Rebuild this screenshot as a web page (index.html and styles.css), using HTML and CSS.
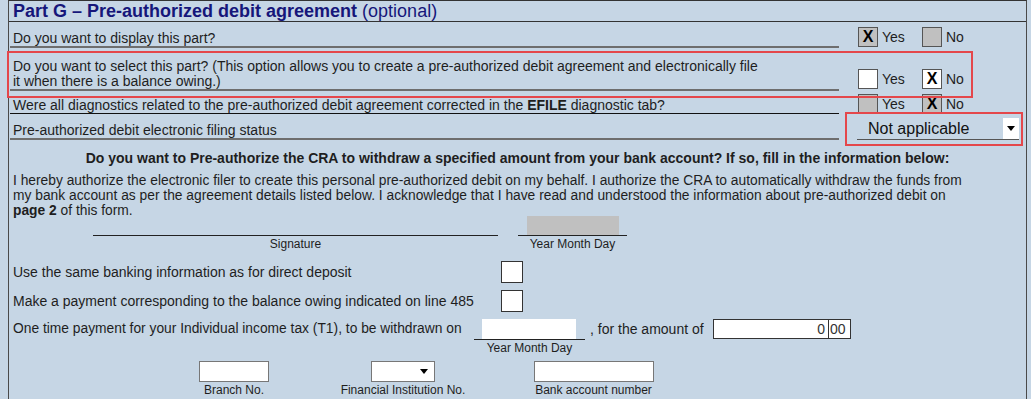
FILE: index.html
```html
<!DOCTYPE html>
<html>
<head>
<meta charset="utf-8">
<link rel="stylesheet" href="styles.css">
</head>
<body>
<div class="form">
  <div class="head"><b>Part G – Pre-authorized debit agreement</b> (optional)</div>

  <div class="q q1">
    <div class="qlabel">Do you want to display this part?</div>
    <div class="opts">
      <span class="opt"><span class="cb gray">X</span>Yes</span>
      <span class="opt"><span class="cb gray"></span>No</span>
    </div>
  </div>

  <div class="q q2 hl">
    <div class="qlabel">Do you want to select this part? (This option allows you to create a pre-authorized debit agreement and electronically file<br>it when there is a balance owing.)</div>
    <div class="opts">
      <span class="opt"><span class="cb"></span>Yes</span>
      <span class="opt"><span class="cb">X</span>No</span>
    </div>
  </div>

  <div class="q q3">
    <div class="qlabel thin">Were all diagnostics related to the pre-authorized debit agreement corrected in the <b>EFILE</b> diagnostic tab?</div>
    <div class="opts">
      <span class="opt"><span class="cb gray"></span>Yes</span>
      <span class="opt"><span class="cb gray">X</span>No</span>
    </div>
  </div>

  <div class="q q4">
    <div class="qlabel">Pre-authorized debit electronic filing status</div>
    <div class="select hl">
      <div class="selfield"><span class="seltext">Not applicable</span><span class="arrow"><span class="tri"></span></span></div>
    </div>
  </div>

  <p class="ask">Do you want to Pre-authorize the CRA to withdraw a specified amount from your bank account? If so, fill in the information below:</p>

  <p class="para">I hereby authorize the electronic filer to create this personal pre-authorized debit on my behalf. I authorize the CRA to automatically withdraw the funds from<br>my bank account as per the agreement details listed below. I acknowledge that I have read and understood the information about pre-authorized debit on<br><b>page 2</b> of this form.</p>

  <div class="sig">
    <div class="sigcol">
      <div class="sigspace"></div>
      <div class="cap">Signature</div>
    </div>
    <div class="datecol">
      <div class="dateline"><div class="datebox"></div></div>
      <div class="cap">Year Month Day</div>
    </div>
  </div>

  <div class="crow first">
    <div class="clabel">Use the same banking information as for direct deposit</div>
    <span class="wbox"></span>
  </div>
  <div class="crow">
    <div class="clabel">Make a payment corresponding to the balance owing indicated on line 485</div>
    <span class="wbox"></span>
  </div>

  <div class="onetime">
    <div class="olabel">One time payment for your Individual income tax (T1), to be withdrawn on</div>
    <div class="odate">
      <div class="dateline"><div class="wfield"></div></div>
      <div class="cap">Year Month Day</div>
    </div>
    <div class="amtlabel">, for the amount of</div>
    <div class="amount"><span class="dollars">0</span><span class="cents">00</span></div>
  </div>

  <div class="bank">
    <div class="bgroup g1">
      <div class="bbox branch"></div>
      <div class="cap">Branch No.</div>
    </div>
    <div class="bgroup g2">
      <div class="bbox fi"><span class="tri"></span></div>
      <div class="cap">Financial Institution No.</div>
    </div>
    <div class="bgroup g3">
      <div class="bbox acct"></div>
      <div class="cap">Bank account number</div>
    </div>
  </div>
</div>
</body>
</html>
```

FILE: styles.css
```css
html, body {
  margin: 0;
  padding: 0;
  background: #c6d6e5;
}
body {
  font-family: "Liberation Sans", Arial, sans-serif;
  font-size: 14px;
  color: #1e1e1e;
}
.form {
  margin-left: 8px;
  width: 1019px;
  box-sizing: border-box;
  min-height: 430px;
  border-left: 1px solid #4a4a4a;
  border-right: 1px solid #4a4a4a;
  border-top: 1px solid #333;
}
.head {
  height: 20px;
  border-bottom: 1px solid #333;
  padding-left: 4px;
  font-size: 18px;
  line-height: 21px;
  color: #16167a;
}
.head b { font-weight: bold; }

.q {
  display: flex;
  align-items: flex-start;
}
.qlabel {
  box-sizing: border-box;
  flex-shrink: 0;
  margin-left: 1px;
  width: 829px;
  padding-left: 3px;
  border-bottom: 2px solid #6e6e6e;
  line-height: 16px;
}
.q1 { height: 26px; }
.q1 .qlabel { height: 26px; padding-top: 8px; }
.q1 .opts { margin-top: 5px; }

.q2 { margin-top: 5px; height: 43px; width: 962px; }
.q2 .qlabel { padding-top: 6px; line-height: 15px; height: 38px; }
.q2 .opts { margin-top: 16px; }

.hl { outline: 2px solid #e4474b; }

.q3 { height: 18px; }
.q3 .qlabel { height: 18px; padding-top: 1px; border-bottom: 1px solid #111; }
.q3 .opts { margin-top: -2px; }
.q3 .cb { height: 20px; }

.q4 { height: 31px; }
.q4 .qlabel { height: 26px; padding-top: 9px; line-height: 15px; }

.opts {
  display: flex;
  flex-shrink: 0;
  margin-left: 19px;
}
.opt {
  display: flex;
  align-items: center;
  width: 64px;
  line-height: 20px;
}
.cb {
  box-sizing: border-box;
  width: 20px;
  height: 20px;
  margin-right: 4px;
  border: 1px solid #555;
  background: #fff;
  font-weight: bold;
  font-size: 16px;
  line-height: 18px;
  text-align: center;
  color: #000;
}
.cb.gray { background: #c0c0c0; }

.select {
  box-sizing: border-box;
  margin-left: 8px;
  margin-top: 0;
  width: 174px;
  height: 30px;
  padding-left: 10px;
  padding-top: 4px;
}
.selfield {
  display: flex;
  width: 162px;
  height: 21px;
  border-bottom: 1px solid #555;
}
.seltext {
  flex: 1;
  padding-left: 11px;
  font-size: 16px;
  line-height: 22px;
  color: #111;
}
.arrow {
  display: flex;
  align-items: center;
  justify-content: center;
  width: 16px;
  height: 21px;
  background: #fff;
}
.tri {
  width: 0;
  height: 0;
  border-left: 4px solid transparent;
  border-right: 4px solid transparent;
  border-top: 5px solid #000;
}

.ask {
  margin: 5px 0 0 0;
  text-align: center;
  font-weight: bold;
  line-height: 16px;
}
.para {
  margin: 7px 0 0 0;
  padding-left: 4px;
  font-size: 13.8px;
  line-height: 15px;
  white-space: nowrap;
}

.sig {
  display: flex;
  margin-top: -2px;
}
.sigcol {
  margin-left: 84px;
  width: 405px;
}
.sigspace {
  height: 19px;
  border-bottom: 1px solid #222;
}
.datecol {
  margin-left: 20px;
  width: 109px;
}
.dateline {
  border-bottom: 1px solid #222;
  padding-left: 9px;
}
.datebox {
  width: 92px;
  height: 19px;
  background: #c0c0c0;
}
.cap {
  text-align: center;
  font-size: 12px;
  line-height: 15px;
  margin-top: 1px;
}

.crow {
  display: flex;
  margin-top: 7px;
  padding-left: 4px;
  height: 22px;
}
.crow.first { margin-top: 9px; }
.clabel {
  width: 488px;
  line-height: 22px;
}
.wbox {
  box-sizing: border-box;
  width: 22px;
  height: 22px;
  border: 1px solid #333;
  background: #fff;
}

.onetime {
  display: flex;
  align-items: flex-start;
  margin-top: 7px;
  padding-left: 4px;
}
.olabel {
  width: 461px;
  line-height: 20px;
  font-size: 13.8px;
}
.odate { width: 111px; }
.odate .dateline { padding-left: 8px; }
.wfield {
  width: 94px;
  height: 20px;
  background: #fff;
}
.amtlabel {
  margin-left: 5px;
  width: 123px;
  line-height: 20px;
}
.amount {
  box-sizing: border-box;
  display: flex;
  width: 138px;
  height: 20px;
  border: 1px solid #333;
  background: #fff;
  line-height: 18px;
  color: #333;
}
.dollars {
  flex: 1;
  text-align: right;
  padding-right: 3px;
}
.cents {
  width: 20px;
  border-left: 1px solid #333;
  padding-left: 1px;
}

.bank {
  display: flex;
  margin-top: 5px;
}
.bgroup {
  display: flex;
  flex-direction: column;
  align-items: center;
}
.g1 { margin-left: 190px; width: 70px; }
.g2 { margin-left: 71px; width: 126px; }
.g3 { margin-left: 67px; width: 121px; }
.bbox {
  box-sizing: border-box;
  height: 21px;
  border: 1px solid #777;
  background: #fff;
}
.branch { width: 70px; }
.fi {
  width: 64px;
  display: flex;
  align-items: center;
  justify-content: flex-end;
  padding-right: 6px;
}
.acct { width: 120px; }
.bank .cap { margin-top: 1px; }
```
